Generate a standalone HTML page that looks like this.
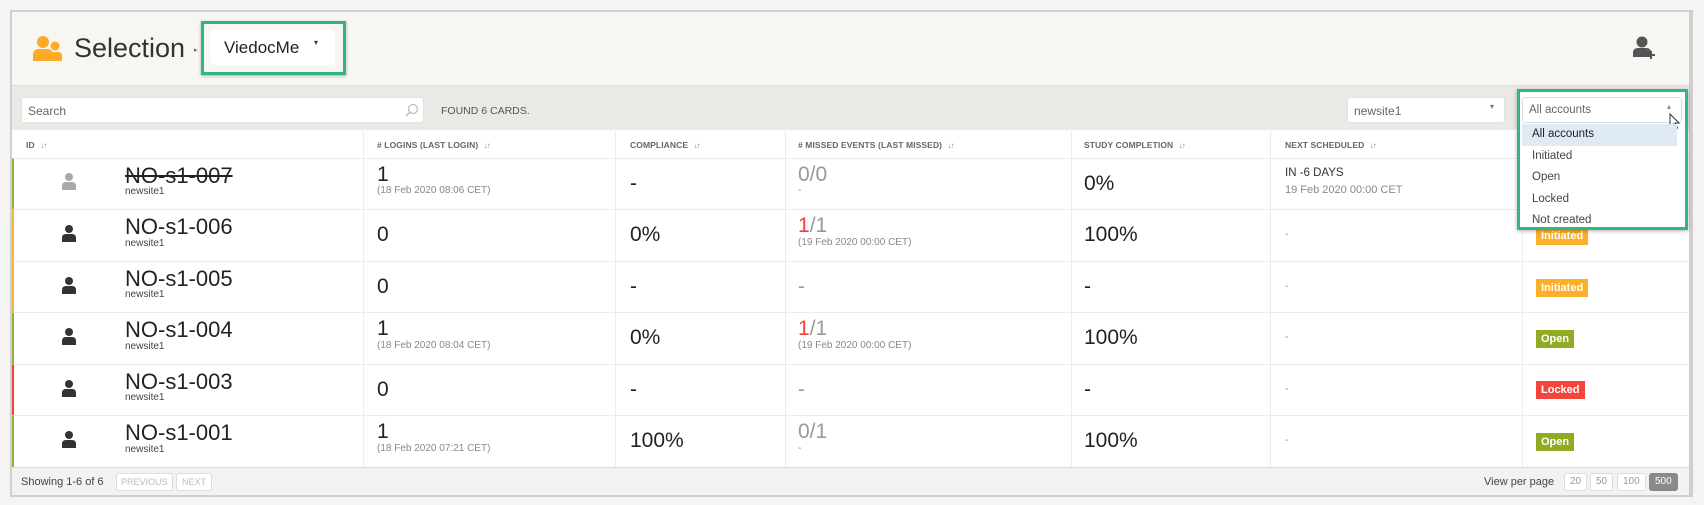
<!DOCTYPE html>
<html><head><meta charset="utf-8"><style>
*{box-sizing:border-box;margin:0;padding:0}
body{width:1704px;height:505px;background:#f4f4f4;font-family:"Liberation Sans",sans-serif;color:#333;position:relative;overflow:hidden}
.a{position:absolute}
.frame{left:10px;top:10px;width:1683px;height:487px;border:2px solid #cfcfcf;border-right-width:4px;border-bottom-width:3px;background:#fff}
.hdr{left:12px;top:12px;width:1677px;height:73px;background:#f8f6f2}
.tb{left:12px;top:85px;width:1677px;height:45px;background:#ebe9e5;border-top:1px solid #ddd}
.inp{background:#fff;border-radius:3px;border:1px solid #e4e2de;font-size:12px;color:#666;padding:6px 6px;height:26px}
.th{top:131px;font-size:8.5px;font-weight:bold;color:#666;letter-spacing:.1px}
.th i{font-style:normal;font-size:8px;color:#888;letter-spacing:-1px;margin-left:3px}
.row{left:12px;width:1677px;height:52px;border-top:1px solid #ececec;background:#fff}
.vl{width:1px;background:#ececec;top:131px;height:336px}
.id{font-size:22px;color:#222}
.sub{font-size:10px;color:#444}
.big{font-size:21px;color:#222}
.date{font-size:10px;color:#888}
.badge{font-size:11px;color:#fff;font-weight:bold;padding:2px 5px;height:18px;line-height:14px}
.foot{left:12px;top:467px;width:1677px;height:28px;background:#f3f2f0;border-top:1px solid #ddd}
.pg{border:1px solid #ddd;border-radius:3px;font-size:10px;color:#bbb;background:#fff;height:18px;line-height:16px;padding:0 5px}
.opt{left:1532px;font-size:11.5px;color:#444}
</style></head><body>
<div class="a frame"></div>
<div class="a hdr"></div>
<svg class="a" style="left:33px;top:35px" width="30" height="27" viewBox="0 0 30 27"><circle cx="10" cy="7" r="6" fill="#fbab24"/><path d="M0 26 V20 Q0 14 6 14 H14 Q20 14 20 20 V26Z" fill="#fbab24"/><circle cx="22" cy="11" r="4.5" fill="#fbab24"/><path d="M18 26 V21 Q18 17 22 17 H25 Q29 17 29 21 V26Z" fill="#fbab24"/></svg>
<div class="a" style="left:74px;top:33px;font-size:27px;color:#333">Selection</div>
<div class="a" style="left:194px;top:46px;font-size:7px;color:#666">▸</div>
<div class="a" style="left:201px;top:21px;width:145px;height:54px;border:3px solid #2fb588;box-shadow:0 1px 3px rgba(0,0,0,.3)"></div>
<div class="a" style="left:210px;top:30px;width:125px;height:35px;background:#fff;border-radius:4px"></div>
<div class="a" style="left:224px;top:38px;font-size:17px;color:#222">ViedocMe</div>
<div class="a" style="left:314px;top:38px;font-size:8px;color:#333">▾</div>
<svg class="a" style="left:1633px;top:36px" width="24" height="23" viewBox="0 0 24 23"><circle cx="9" cy="6" r="5.5" fill="#555"/><path d="M0 21 V17 Q0 12 5 12 H13 Q17 12 18 15 V21Z" fill="#555"/><path d="M17 15 h2 v3 h3 v2 h-3 v3 h-2 v-3 h-3 v-2 h3z" fill="#555"/></svg>
<div class="a tb"></div>
<div class="a inp" style="left:21px;top:97px;width:403px">Search</div>
<svg class="a" style="left:405px;top:103px" width="14" height="14"><circle cx="8" cy="6" r="4.5" fill="none" stroke="#bbb" stroke-width="1.2"/><line x1="5" y1="9" x2="1" y2="13" stroke="#bbb" stroke-width="1.4"/></svg>
<div class="a" style="left:441px;top:105px;font-size:10.5px;color:#555">FOUND 6 CARDS.</div>
<div class="a inp" style="left:1347px;top:97px;width:158px">newsite1</div>
<div class="a" style="left:1490px;top:102px;font-size:8px;color:#777">▾</div>

<div class="a th" style="left:26px;top:140px">ID <i>↓↑</i></div>
<div class="a th" style="left:377px;top:140px"># LOGINS (LAST LOGIN) <i>↓↑</i></div>
<div class="a th" style="left:630px;top:140px">COMPLIANCE <i>↓↑</i></div>
<div class="a th" style="left:798px;top:140px"># MISSED EVENTS (LAST MISSED) <i>↓↑</i></div>
<div class="a th" style="left:1084px;top:140px">STUDY COMPLETION <i>↓↑</i></div>
<div class="a th" style="left:1285px;top:140px">NEXT SCHEDULED <i>↓↑</i></div>

<div class="a row" style="top:158px;border-left:2px solid #8fb63a"></div>
<div class="a row" style="top:209px;border-left:2px solid #fbb43a"></div>
<div class="a row" style="top:261px;border-left:2px solid #fbb43a"></div>
<div class="a row" style="top:312px;border-left:2px solid #8fb63a"></div>
<div class="a row" style="top:364px;border-left:2px solid #f0413a"></div>
<div class="a row" style="top:415px;border-left:2px solid #8fb63a"></div>
<div class="a vl" style="left:363px"></div><div class="a vl" style="left:615px"></div><div class="a vl" style="left:785px"></div><div class="a vl" style="left:1071px"></div><div class="a vl" style="left:1270px"></div><div class="a vl" style="left:1522px"></div>

<svg width="0" height="0" style="position:absolute"><defs><g id="p"><circle cx="7" cy="5" r="4"/><path d="M0 18 V14 Q0 10 4 10 H10 Q14 10 14 14 V18Z"/></g></defs></svg>
<svg class="a" style="left:62px;top:172px" width="14" height="18" fill="#aaa"><use href="#p"/></svg>
<svg class="a" style="left:62px;top:224px" width="14" height="18" fill="#333"><use href="#p"/></svg>
<svg class="a" style="left:62px;top:276px" width="14" height="18" fill="#333"><use href="#p"/></svg>
<svg class="a" style="left:62px;top:327px" width="14" height="18" fill="#333"><use href="#p"/></svg>
<svg class="a" style="left:62px;top:379px" width="14" height="18" fill="#333"><use href="#p"/></svg>
<svg class="a" style="left:62px;top:430px" width="14" height="18" fill="#333"><use href="#p"/></svg>

<div class="a id" style="left:125px;top:163px;text-decoration:line-through">NO-s1-007</div><div class="a sub" style="left:125px;top:186px">newsite1</div>
<div class="a id" style="left:125px;top:214px">NO-s1-006</div><div class="a sub" style="left:125px;top:238px">newsite1</div>
<div class="a id" style="left:125px;top:266px">NO-s1-005</div><div class="a sub" style="left:125px;top:289px">newsite1</div>
<div class="a id" style="left:125px;top:317px">NO-s1-004</div><div class="a sub" style="left:125px;top:341px">newsite1</div>
<div class="a id" style="left:125px;top:369px">NO-s1-003</div><div class="a sub" style="left:125px;top:392px">newsite1</div>
<div class="a id" style="left:125px;top:420px">NO-s1-001</div><div class="a sub" style="left:125px;top:444px">newsite1</div>

<div class="a big" style="left:377px;top:163px">1</div><div class="a date" style="left:377px;top:185px">(18 Feb 2020 08:06 CET)</div>
<div class="a big" style="left:377px;top:223px">0</div>
<div class="a big" style="left:377px;top:275px">0</div>
<div class="a big" style="left:377px;top:317px">1</div><div class="a date" style="left:377px;top:340px">(18 Feb 2020 08:04 CET)</div>
<div class="a big" style="left:377px;top:378px">0</div>
<div class="a big" style="left:377px;top:420px">1</div><div class="a date" style="left:377px;top:443px">(18 Feb 2020 07:21 CET)</div>

<div class="a big" style="left:630px;top:172px">-</div>
<div class="a big" style="left:630px;top:223px">0%</div>
<div class="a big" style="left:630px;top:275px">-</div>
<div class="a big" style="left:630px;top:326px">0%</div>
<div class="a big" style="left:630px;top:378px">-</div>
<div class="a big" style="left:630px;top:429px">100%</div>

<div class="a big" style="left:798px;top:163px;color:#999">0/0</div><div class="a date" style="left:798px;top:185px">-</div>
<div class="a big" style="left:798px;top:214px;color:#999"><span style="color:#f0413a">1</span>/1</div><div class="a date" style="left:798px;top:237px">(19 Feb 2020 00:00 CET)</div>
<div class="a big" style="left:798px;top:275px;color:#999">-</div>
<div class="a big" style="left:798px;top:317px;color:#999"><span style="color:#f0413a">1</span>/1</div><div class="a date" style="left:798px;top:340px">(19 Feb 2020 00:00 CET)</div>
<div class="a big" style="left:798px;top:378px;color:#999">-</div>
<div class="a big" style="left:798px;top:420px;color:#999">0/1</div><div class="a date" style="left:798px;top:443px">-</div>

<div class="a big" style="left:1084px;top:172px">0%</div>
<div class="a big" style="left:1084px;top:223px">100%</div>
<div class="a big" style="left:1084px;top:275px">-</div>
<div class="a big" style="left:1084px;top:326px">100%</div>
<div class="a big" style="left:1084px;top:378px">-</div>
<div class="a big" style="left:1084px;top:429px">100%</div>

<div class="a" style="left:1285px;top:167px;font-size:11.5px;color:#333">IN -6 DAYS</div><div class="a date" style="left:1285px;top:184px;font-size:11px">19 Feb 2020 00:00 CET</div>
<div class="a date" style="left:1285px;top:229px">-</div>
<div class="a date" style="left:1285px;top:281px">-</div>
<div class="a date" style="left:1285px;top:332px">-</div>
<div class="a date" style="left:1285px;top:384px">-</div>
<div class="a date" style="left:1285px;top:435px">-</div>

<div class="a badge" style="left:1536px;top:227px;background:#fbaf2a">Initiated</div>
<div class="a badge" style="left:1536px;top:279px;background:#fbaf2a">Initiated</div>
<div class="a badge" style="left:1536px;top:330px;background:#8fac24">Open</div>
<div class="a badge" style="left:1536px;top:381px;background:#f3453b">Locked</div>
<div class="a badge" style="left:1536px;top:433px;background:#8fac24">Open</div>

<div class="a foot"></div>
<div class="a" style="left:21px;top:476px;font-size:11px;color:#444">Showing 1-6 of 6</div>
<div class="a pg" style="left:116px;top:473px;font-size:9px;padding:0 4px">PREVIOUS</div>
<div class="a pg" style="left:176px;top:473px;font-size:9px;padding:0 5px">NEXT</div>
<div class="a" style="left:1484px;top:476px;font-size:11px;color:#444">View per page</div>
<div class="a pg" style="left:1564px;top:473px;color:#999">20</div>
<div class="a pg" style="left:1590px;top:473px;color:#999">50</div>
<div class="a pg" style="left:1617px;top:473px;color:#999">100</div>
<div class="a pg" style="left:1649px;top:473px;background:#8a8a8a;color:#fff;border-color:#888">500</div>

<div class="a" style="left:1517px;top:89px;width:171px;height:141px;border:3px solid #2fb588;box-shadow:0 1px 4px rgba(0,0,0,.3);background:#fff"></div>
<div class="a inp" style="left:1522px;top:97px;width:160px;border-color:#ddd;font-size:11.5px">All accounts</div>
<div class="a" style="left:1667px;top:102px;font-size:8px;color:#888">▴</div>
<svg class="a" style="left:1669px;top:113px" width="12" height="18"><path d="M1 1 V14 L4 11 L6.5 16 L8.5 15 L6 10 H10Z" fill="#fff" stroke="#333"/></svg>
<div class="a" style="left:1522px;top:124px;width:155px;height:22px;background:#dfeaf5"></div>
<div class="a opt" style="top:128px;color:#222">All accounts</div>
<div class="a opt" style="top:150px">Initiated</div>
<div class="a opt" style="top:171px">Open</div>
<div class="a opt" style="top:193px">Locked</div>
<div class="a opt" style="top:214px">Not created</div>
</body></html>
